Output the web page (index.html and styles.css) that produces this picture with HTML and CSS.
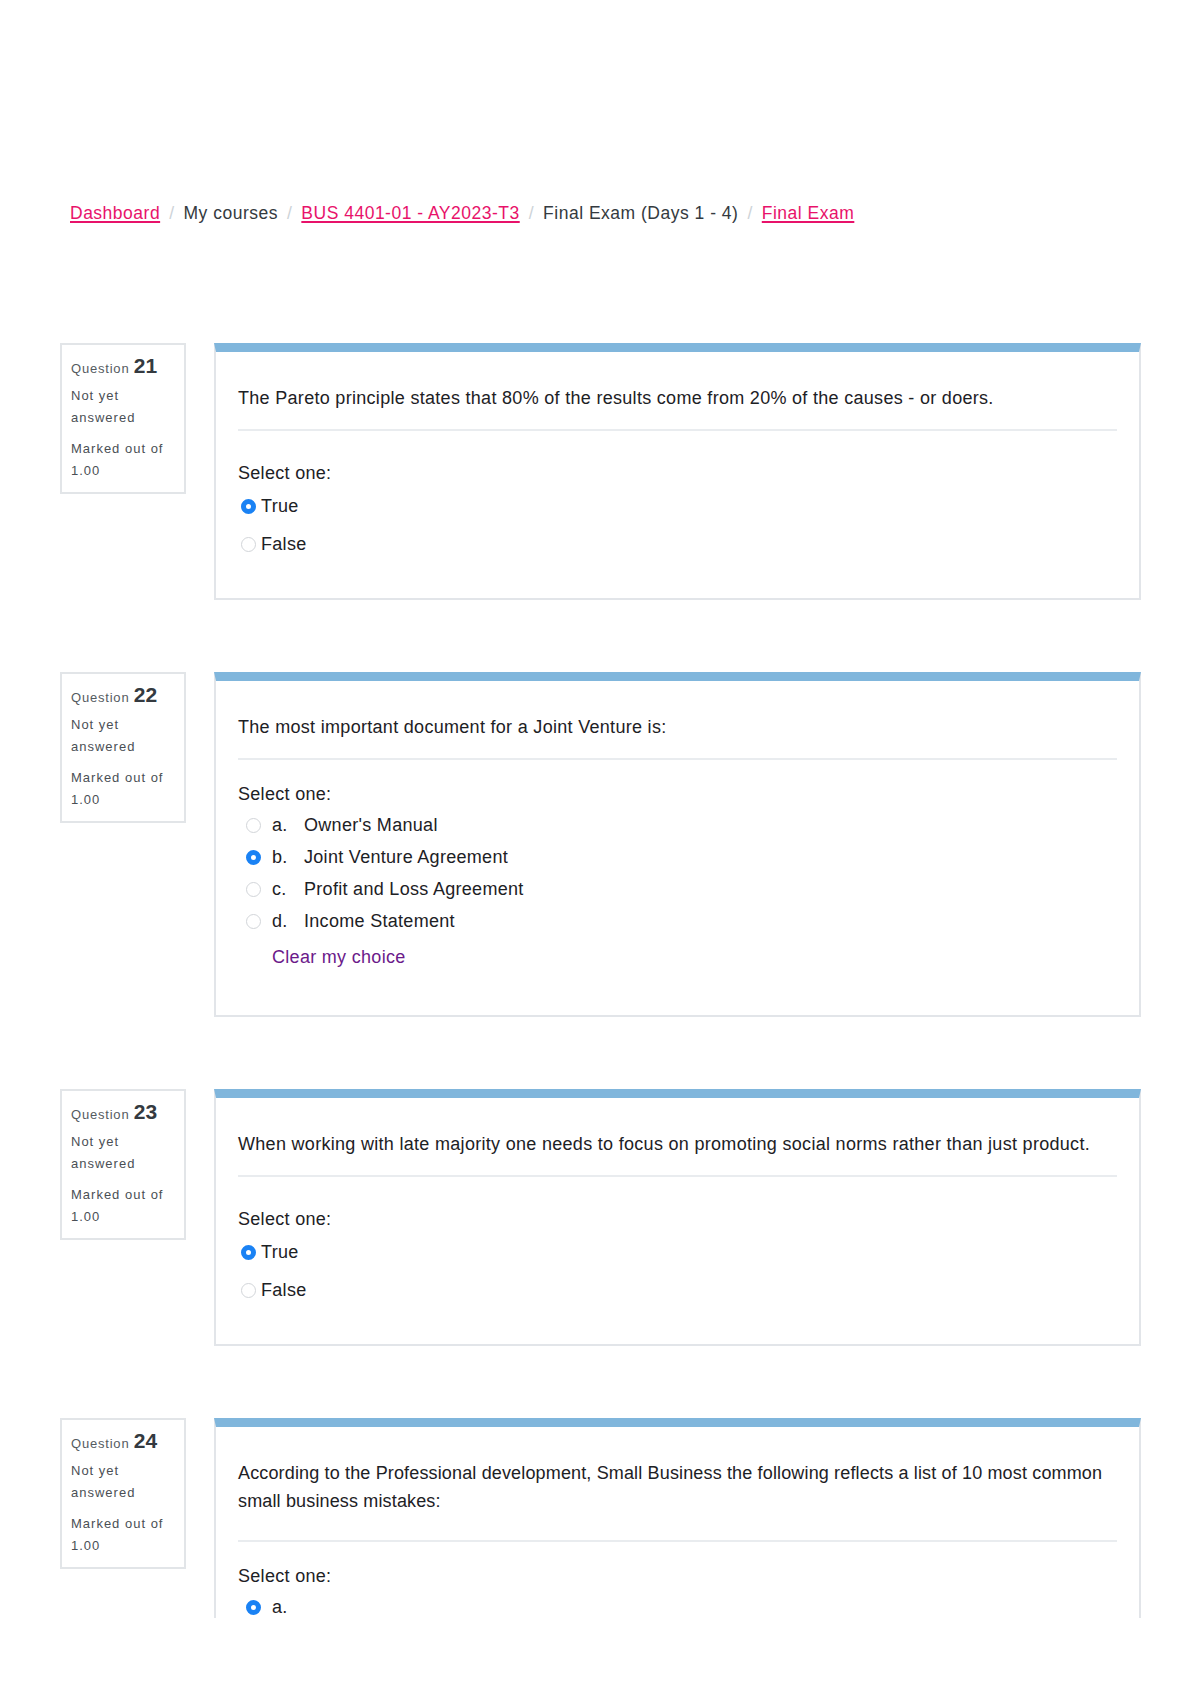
FILE: index.html
```html
<!DOCTYPE html>
<html lang="en">
<head>
<meta charset="utf-8">
<title>Final Exam</title>
<link rel="stylesheet" href="styles.css">
</head>
<body>
<div class="page">
  <nav class="breadcrumb">
    <a href="#" class="crumb-link">Dashboard</a><span class="sep">/</span>
    <span class="crumb">My courses</span><span class="sep">/</span>
    <a href="#" class="crumb-link">BUS 4401-01 - AY2023-T3</a><span class="sep">/</span>
    <span class="crumb">Final Exam (Days 1 - 4)</span><span class="sep">/</span>
    <a href="#" class="crumb-link">Final Exam</a>
  </nav>

  <div class="questions">
    <section class="que">
      <div class="info">
        <div class="qno">Question <b>21</b></div>
        <div class="state">Not yet answered</div>
        <div class="grade">Marked out of 1.00</div>
      </div>
      <div class="card">
        <div class="qtext">The Pareto principle states that 80% of the results come from 20% of the causes - or doers.</div>
        <hr class="rule">
        <div class="prompt">Select one:</div>
        <div class="answer tf">
          <div class="opt"><span class="radio checked"></span><span class="label">True</span></div>
          <div class="opt"><span class="radio"></span><span class="label">False</span></div>
        </div>
      </div>
    </section>

    <section class="que">
      <div class="info">
        <div class="qno">Question <b>22</b></div>
        <div class="state">Not yet answered</div>
        <div class="grade">Marked out of 1.00</div>
      </div>
      <div class="card card-multi">
        <div class="qtext">The most important document for a Joint Venture is:</div>
        <hr class="rule">
        <div class="prompt">Select one:</div>
        <div class="answer multi">
          <div class="opt"><span class="radio"></span><span class="letter">a.</span><span class="label">Owner's Manual</span></div>
          <div class="opt"><span class="radio checked"></span><span class="letter">b.</span><span class="label">Joint Venture Agreement</span></div>
          <div class="opt"><span class="radio"></span><span class="letter">c.</span><span class="label">Profit and Loss Agreement</span></div>
          <div class="opt"><span class="radio"></span><span class="letter">d.</span><span class="label">Income Statement</span></div>
          <a href="#" class="clear">Clear my choice</a>
        </div>
      </div>
    </section>

    <section class="que">
      <div class="info">
        <div class="qno">Question <b>23</b></div>
        <div class="state">Not yet answered</div>
        <div class="grade">Marked out of 1.00</div>
      </div>
      <div class="card">
        <div class="qtext">When working with late majority one needs to focus on promoting social norms rather than just product.</div>
        <hr class="rule">
        <div class="prompt">Select one:</div>
        <div class="answer tf">
          <div class="opt"><span class="radio checked"></span><span class="label">True</span></div>
          <div class="opt"><span class="radio"></span><span class="label">False</span></div>
        </div>
      </div>
    </section>

    <section class="que">
      <div class="info">
        <div class="qno">Question <b>24</b></div>
        <div class="state">Not yet answered</div>
        <div class="grade">Marked out of 1.00</div>
      </div>
      <div class="card card-multi">
        <div class="qtext qtext-long">According to the Professional development, Small Business the following reflects a list of 10 most common small business mistakes:</div>
        <hr class="rule">
        <div class="prompt">Select one:</div>
        <div class="answer multi">
          <div class="opt"><span class="radio checked"></span><span class="letter">a.</span><span class="label"></span></div>
        </div>
      </div>
    </section>
  </div>
</div>
</body>
</html>
```

FILE: styles.css
```css
html, body {
  margin: 0;
  padding: 0;
  background: #ffffff;
}

body {
  font-family: "Liberation Sans", Arial, sans-serif;
  color: #1d2125;
  width: 1200px;
  height: 1698px;
}

.page {
  height: 1618px;
  overflow: hidden;
  padding: 200px 59px 0 60px;
  box-sizing: border-box;
}

/* breadcrumb */
.breadcrumb {
  display: flex;
  align-items: center;
  padding-left: 10px;
  font-size: 17.5px;
  line-height: 26px;
  color: #343a40;
  letter-spacing: 0.5px;
}

.crumb-link {
  color: #e8126a;
  text-decoration: underline;
  text-decoration-thickness: 2px;
  text-underline-offset: 2px;
}

.sep {
  color: #cdd3d8;
  padding: 0 9px;
}

.questions {
  margin-top: 117px;
  display: flex;
  flex-direction: column;
  gap: 72px;
}

.que {
  display: flex;
  align-items: flex-start;
  gap: 28px;
}

/* info box */
.info {
  flex: none;
  width: 126px;
  box-sizing: border-box;
  height: 151px;
  border: 2px solid #e2e5e8;
  padding: 8px 0 0 9px;
  font-size: 13px;
  line-height: 22px;
  color: #4a4f55;
  letter-spacing: 1px;
}

.qno {
  font-size: 13px;
  line-height: 26px;
  color: #555b61;
  letter-spacing: 0.8px;
}

.qno b {
  font-size: 21px;
  color: #343a40;
  letter-spacing: 0;
}

.state {
  margin-top: 3px;
  width: 80px;
}

.grade {
  margin-top: 9px;
  width: 112px;
}

/* card */
.card {
  flex: 1;
  border: 2px solid #e2e5e9;
  border-top: 9px solid #80b6dc;
  padding: 32px 20px 40px 22px;
  font-size: 18px;
  line-height: 28px;
  color: #1d2125;
  letter-spacing: 0.3px;
}

.card-multi {
  padding-bottom: 44px;
}

.qtext-long {
  padding-bottom: 8px;
  letter-spacing: 0.15px;
}

.rule {
  border: 0;
  height: 2px;
  background: #e9ecef;
  margin: 17px 2px 0 0;
}

.prompt {
  margin-top: 28px;
}

.card-multi .prompt {
  margin-top: 20px;
}

.answer.tf {
  margin-top: 5px;
  display: flex;
  flex-direction: column;
  gap: 10px;
}

.answer.multi {
  margin-top: 3px;
  display: flex;
  flex-direction: column;
  gap: 4px;
  padding-left: 5px;
}

.opt {
  display: flex;
  align-items: center;
  height: 28px;
}

.radio {
  flex: none;
  width: 15px;
  height: 15px;
  box-sizing: border-box;
  border-radius: 50%;
  border: 1.5px solid #d2d5d9;
  background: #ffffff;
  margin-right: 5px;
  margin-left: 3px;
}

.radio.checked {
  border: 5px solid #1a82f4;
  background: #ffffff;
}

.multi .radio {
  margin-right: 11px;
}

.letter {
  width: 32px;
  color: #1d2125;
}

.clear {
  margin-top: 4px;
  padding-left: 29px;
  color: #6b1a8a;
  text-decoration: none;
  line-height: 28px;
  align-self: flex-start;
}
```
